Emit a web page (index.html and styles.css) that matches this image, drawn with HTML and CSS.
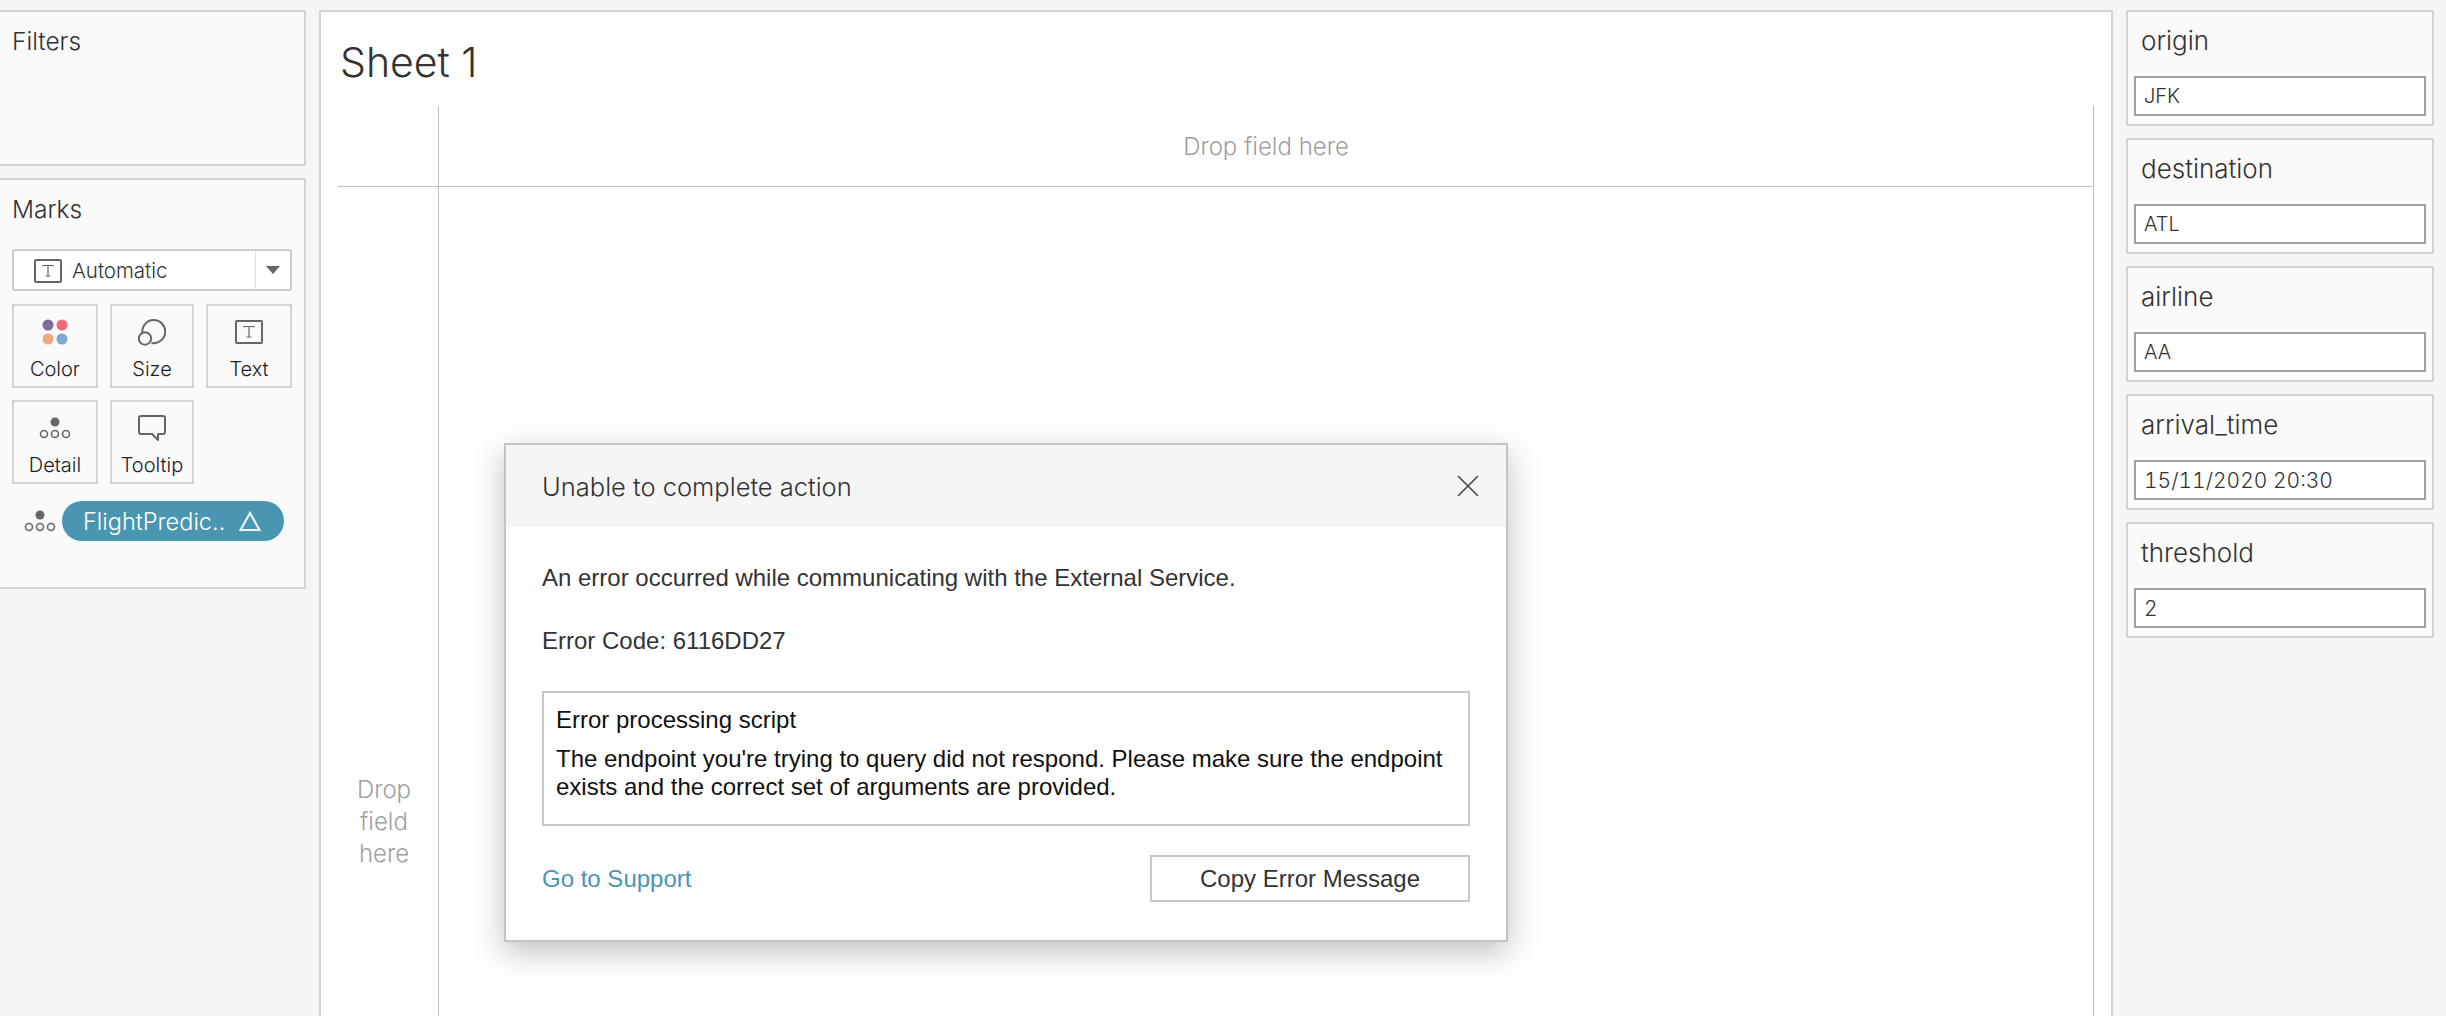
FILE: index.html
```html
<!DOCTYPE html>
<html lang="en">
<head>
<meta charset="utf-8">
<title>Sheet 1</title>
<link rel="stylesheet" href="styles.css">
</head>
<body>
<div class="app">
  <aside class="left">
    <section class="panel filters"><h2 class="panel-title">Filters</h2></section>
    <section class="panel marks">
      <h2 class="panel-title">Marks</h2>
      <div class="select">
        <div class="select-main">
          <svg width="28" height="24" viewBox="0 0 28 24"><rect x="1" y="1" width="26" height="22" rx="1" fill="none" stroke="#666" stroke-width="2"/><path d="M9 7.500V6.500H19V7.500M14 6.500V17M11.500 17H16.500" fill="none" stroke="#666" stroke-width="1.200"/></svg>
          <span>Automatic</span>
        </div>
        <div class="select-arrow"><svg width="14" height="8" viewBox="0 0 14 8"><path d="M0 0H14L7 8Z" fill="#666"/></svg></div>
      </div>
      <div class="cards">
        <div class="card">
          <span class="card-icon"><svg width="26" height="26" viewBox="0 0 26 26"><circle cx="6" cy="6" r="5.500" fill="#7f6a9c"/><circle cx="20" cy="6" r="5.500" fill="#f2697f"/><circle cx="6" cy="20" r="5.500" fill="#f2a87a"/><circle cx="20" cy="20" r="5.500" fill="#7fa7d0"/></svg></span>
          <span>Color</span>
        </div>
        <div class="card">
          <span class="card-icon"><svg width="28" height="27" viewBox="0 0 28 27"><path d="M4.300 14A11.500 11.500 0 1 1 13.500 23.900" fill="none" stroke="#666" stroke-width="2"/><circle cx="7" cy="19.500" r="6.200" fill="none" stroke="#666" stroke-width="2"/></svg></span>
          <span>Size</span>
        </div>
        <div class="card">
          <span class="card-icon"><svg width="28" height="24" viewBox="0 0 28 24"><rect x="1" y="1" width="26" height="22" rx="1" fill="none" stroke="#666" stroke-width="2"/><path d="M9 7.500V6.500H19V7.500M14 6.500V17M11.500 17H16.500" fill="none" stroke="#666" stroke-width="1.200"/></svg></span>
          <span>Text</span>
        </div>
        <div class="card">
          <span class="card-icon"><svg width="32" height="22" viewBox="0 0 32 22"><circle cx="16" cy="5" r="4.500" fill="#666"/><circle cx="5" cy="17" r="3.500" fill="none" stroke="#666" stroke-width="1.600"/><circle cx="16" cy="17" r="3.500" fill="none" stroke="#666" stroke-width="1.600"/><circle cx="27" cy="17" r="3.500" fill="none" stroke="#666" stroke-width="1.600"/></svg></span>
          <span>Detail</span>
        </div>
        <div class="card">
          <span class="card-icon"><svg width="28" height="26" viewBox="0 0 28 26"><path d="M3 1H25A2 2 0 0 1 27 3V17A2 2 0 0 1 25 19H20V25L14 19H3A2 2 0 0 1 1 17V3A2 2 0 0 1 3 1Z" fill="none" stroke="#666" stroke-width="2" stroke-linejoin="round"/></svg></span>
          <span>Tooltip</span>
        </div>
      </div>
      <div class="field-row">
        <svg width="32" height="22" viewBox="0 0 32 22"><circle cx="16" cy="5" r="4.500" fill="#666"/><circle cx="5" cy="17" r="3.500" fill="none" stroke="#666" stroke-width="1.600"/><circle cx="16" cy="17" r="3.500" fill="none" stroke="#666" stroke-width="1.600"/><circle cx="27" cy="17" r="3.500" fill="none" stroke="#666" stroke-width="1.600"/></svg>
        <div class="pill"><span>FlightPredic..</span><svg width="22" height="20" viewBox="0 0 22 20"><path d="M11 2L20.500 19H1.500Z" fill="none" stroke="#fff" stroke-width="2.200" opacity=".9"/></svg></div>
      </div>
    </section>
  </aside>

  <main class="sheet">
    <h1 class="sheet-title">Sheet 1</h1>
    <div class="viz">
      <div class="corner"></div>
      <div class="drop-top">Drop field here</div>
      <div class="drop-left">Drop<br>field<br>here</div>
      <div class="canvas"></div>
    </div>
  </main>

  <aside class="right">
    <section class="param"><h3 class="param-title">origin</h3><div class="param-input">JFK</div></section>
    <section class="param"><h3 class="param-title">destination</h3><div class="param-input">ATL</div></section>
    <section class="param"><h3 class="param-title">airline</h3><div class="param-input">AA</div></section>
    <section class="param"><h3 class="param-title">arrival_time</h3><div class="param-input param-num">15/11/2020 20:30</div></section>
    <section class="param"><h3 class="param-title">threshold</h3><div class="param-input param-num">2</div></section>
  </aside>
</div>

<div class="dialog">
  <header class="dialog-head">
    <span class="dialog-title">Unable to complete action</span>
    <svg width="22" height="22" viewBox="0 0 22 22"><path d="M1 1L21 21M21 1L1 21" stroke="#444" stroke-width="1.600" fill="none"/></svg>
  </header>
  <div class="dialog-body">
    <p class="msg">An error occurred while communicating with the External Service.</p>
    <p class="msg">Error Code: 6116DD27</p>
    <div class="errbox">
      <p>Error processing script</p>
      <p class="errbox-text">The endpoint you're trying to query did not respond. Please make sure the endpoint exists and the correct set of arguments are provided.</p>
    </div>
    <div class="dialog-foot">
      <a class="support">Go to Support</a>
      <div class="copy">Copy Error Message</div>
    </div>
  </div>
</div>
</body>
</html>
```
FILE: styles.css
```css
* { box-sizing: border-box; }
html, body { margin: 0; padding: 0; height: 100%; }
body {
  background: #f5f5f5;
  overflow: hidden;
  font-family: Inter, Roboto, "Liberation Sans", sans-serif;
  color: #333;
  position: relative;
}
h1, h2, h3, p { margin: 0; font-weight: 400; }

.app {
  display: flex;
  gap: 13px;
  padding: 10px 12px 0 0;
  height: 100%;
}

/* left column */
.left { width: 306px; flex: none; display: flex; flex-direction: column; gap: 12px; }
.panel {
  background: #fafafa;
  border: 2px solid #d4d4d4;
  border-left: none;
  padding: 15px 12px 0 12px;
}
.panel-title { font-size: 24.500px; line-height: 28px; font-weight: 300; color: #333; }
.filters { height: 156px; flex: none; }
.marks { height: 411px; flex: none; }
.select {
  margin: 26px 0 0 0;
  width: 280px;
  height: 42px;
  display: flex;
  background: #fff;
  border: 2px solid #ccc;
  border-radius: 3px;
}
.select-main { flex: 1; display: flex; align-items: center; gap: 10px; padding-left: 20px; font-size: 20.500px; font-weight: 300; color: #333; border-right: 1px solid #ddd; padding-top: 1px; }
.select-arrow { width: 34px; display: flex; align-items: center; justify-content: center; }
.cards { display: grid; grid-template-columns: 86px 84px 86px; grid-auto-rows: 84px; column-gap: 12px; row-gap: 12px; margin: 13px 0 0 0; }
.card {
  border: 2px solid #d4d4d4;
  display: flex;
  flex-direction: column;
  align-items: center;
  padding-top: 12px;
  font-size: 20px;
  font-weight: 300;
  color: #222;
  line-height: 26px;
}
.card-icon { height: 28px; display: flex; align-items: center; margin-bottom: 10px; }
.field-row { display: flex; align-items: center; gap: 6px; margin: 17px 0 0 12px; }
.pill {
  width: 222px;
  height: 40px;
  border-radius: 20px;
  background: #4996b2;
  color: #fff;
  display: flex;
  align-items: center;
  justify-content: space-between;
  padding: 0 23px 0 21px;
  font-size: 23.500px;
  font-weight: 300;
}

/* sheet */
.sheet { flex: 1; background: #fff; border: 2px solid #d4d4d4; border-bottom: none; padding: 0 17px 0 17px; display: flex; flex-direction: column; }
.sheet-title { font-size: 41px; line-height: 48px; height: 48px; margin-top: 26px; font-weight: 300; color: #333; margin-left: 2px; }
.viz {
  flex: 1;
  margin-top: 20px;
  display: grid;
  grid-template-columns: 101px 1fr;
  grid-template-rows: 81px 1fr;
  border-right: 1px solid #c2c2c2;
}
.corner { border-right: 1px solid #c2c2c2; border-bottom: 1px solid #c2c2c2; }
.drop-top { border-bottom: 1px solid #c2c2c2; display: flex; align-items: center; justify-content: center; font-size: 24px; font-weight: 300; color: #a0a0a0; padding: 1px 0 0 0; }
.drop-left { border-right: 1px solid #c2c2c2; text-align: center; font-size: 24px; line-height: 32px; font-weight: 300; color: #a0a0a0; padding: 587px 8px 0 0; }
.canvas { background: #fff; }

/* right */
.right { width: 308px; flex: none; display: flex; flex-direction: column; gap: 12px; }
.param { height: 116px; flex: none; background: #fafafa; border: 2px solid #d4d4d4; padding: 15px 6px 0 6px; }
.param-title { font-size: 26px; line-height: 28px; font-weight: 300; color: #333; padding-left: 7px; }
.param-input { margin-top: 21px; height: 40px; background: #fff; border: 2px solid #a0a0a0; display: flex; align-items: center; padding-left: 8px; font-size: 20px; font-weight: 300; color: #333; }
.param-num { font-size: 21px; font-variant-numeric: tabular-nums; }

/* dialog */
.dialog {
  position: absolute;
  left: 504px;
  top: 443px;
  width: 1004px;
  height: 499px;
  background: #fff;
  border: 2px solid #c4c4c4;
  box-shadow: 0 10px 30px rgba(0,0,0,.25);
  display: flex;
  flex-direction: column;
}
.dialog-head {
  height: 82px;
  flex: none;
  background: #f5f5f5;
  display: flex;
  align-items: center;
  justify-content: space-between;
  padding: 0 27px 0 36px;
}
.dialog-title { font-size: 25.500px; font-weight: 300; color: #333; }
.dialog-body { flex: 1; padding: 0 36px; font-family: "Liberation Sans", Arial, sans-serif; }
.msg { font-size: 24px; line-height: 28px; color: #333; margin-top: 35px; }
.msg:first-child { margin-top: 37px; }
.errbox { margin-top: 36px; height: 135px; border: 2px solid #c8c8c8; padding: 13px 12px 0 12px; color: #111; font-size: 24px; line-height: 28px; }
.errbox-text { margin-top: 11px; }
.dialog-foot { display: flex; justify-content: space-between; align-items: center; margin-top: 29px; }
.support { font-size: 24px; color: #4996b2; }
.copy { width: 320px; height: 47px; border: 2px solid #c8c8c8; display: flex; align-items: center; justify-content: center; font-size: 24px; color: #333; }
```
